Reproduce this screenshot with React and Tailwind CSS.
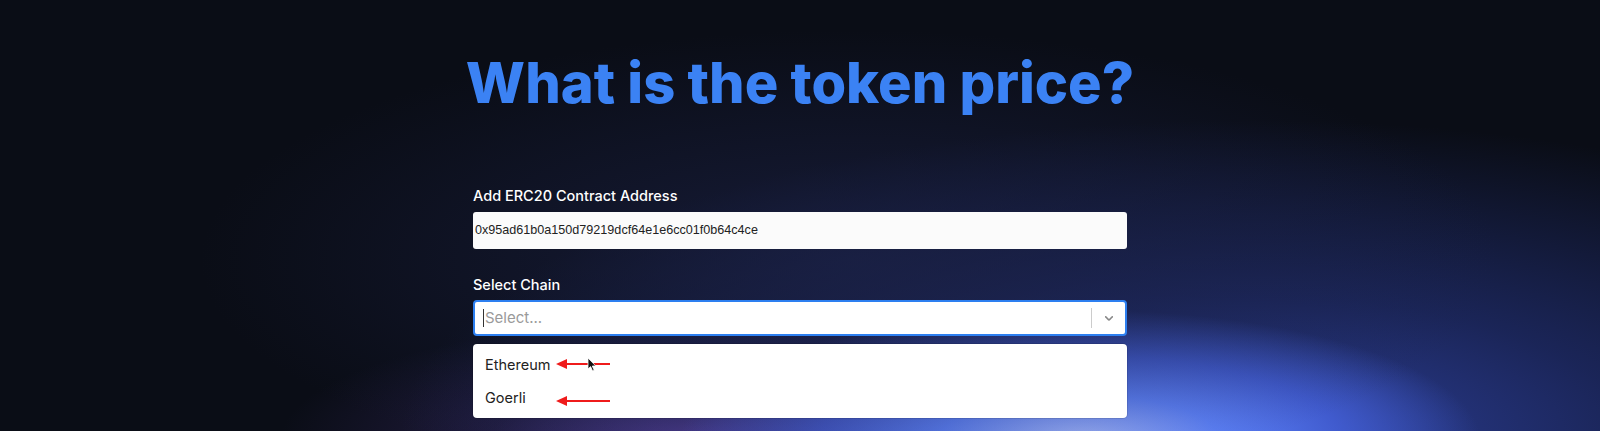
import React from "react";

function Arrow({ className }) {
    return (
        <svg className={className} width="54" height="12" viewBox="0 0 54 12">
            <line x1="8" y1="6" x2="54" y2="6" stroke="#ef1b1b" strokeWidth="2.2" />
            <polygon points="0,6 11,1 11,11" fill="#ef1b1b" />
        </svg>
    );
}

function Cursor({ className }) {
    return (
        <svg className={className} width="10" height="15" viewBox="0 0 10 15">
            <path d="M1 1 L1 12 L3.6 9.6 L5.6 14 L7.2 13.3 L5.3 9 L8.8 9 Z" fill="#111" stroke="#fff" strokeWidth="0.8" />
        </svg>
    );
}

export default function App() {
    return (
        <div className="relative h-[431px] w-full overflow-hidden bg-[#0a0d16] font-['Inter',sans-serif]">
            {/* glow in the background */}
            <div className="absolute inset-0 bg-[radial-gradient(ellipse_850px_320px_at_1250px_440px,rgba(48,68,165,0.95)_0%,rgba(32,45,110,0.75)_45%,transparent_100%)]" />
            <div className="absolute inset-0 bg-[radial-gradient(ellipse_420px_120px_at_700px_440px,rgba(95,70,170,0.75)_0%,rgba(60,45,110,0.4)_50%,transparent_100%)]" />
            <div className="absolute inset-0 bg-[radial-gradient(ellipse_400px_130px_at_1080px_440px,#a2b6fb_0%,#5b7ff5_35%,rgba(72,102,228,0.75)_65%,transparent_100%)]" />
            <div className="absolute inset-0 bg-[radial-gradient(ellipse_650px_230px_at_850px_260px,rgba(28,34,72,0.7)_0%,transparent_100%)]" />

            <div className="relative flex flex-col items-center pt-[55px]">
                <h1 className="text-[56px] font-extrabold leading-none tracking-[0px] text-[#3b82f4]">
                    What is the token price?
                </h1>

                <div className="mt-[76px] w-[654px]">
                    <label className="block text-[14.5px] font-medium leading-[18px] text-white">
                        Add ERC20 Contract Address
                    </label>
                    <div className="mt-[7px] flex h-[37px] items-center rounded-[3px] bg-[#fbfbfb] px-[2px] font-['Liberation_Sans',sans-serif] text-[12.6px] text-[#222]">
                        0x95ad61b0a150d79219dcf64e1e6cc01f0b64c4ce
                    </div>

                    <label className="mt-[27px] block text-[14.5px] font-medium leading-[18px] text-white">
                        Select Chain
                    </label>
                    <div className="relative mt-[6px]">
                        <div className="flex h-[36px] items-center rounded-[4px] border-2 border-[#2d7ff0] bg-white">
                            <div className="flex flex-1 items-center pl-[8px] text-[15px] text-[#9a9a9a]">
                                <span className="mr-[1px] h-[18px] w-px bg-[#333]" />
                                Select...
                            </div>
                            <span className="h-[20px] w-px bg-[#ccc]" />
                            <div className="flex w-[33px] items-center justify-center text-[#888]">
                                <svg width="14" height="14" viewBox="0 0 20 20" fill="currentColor">
                                    <path d="M4.516 7.548c0.436-0.446 1.043-0.481 1.576 0l3.908 3.747 3.908-3.747c0.533-0.481 1.141-0.446 1.574 0 0.436 0.445 0.408 1.197 0 1.615-0.406 0.418-4.695 4.502-4.695 4.502-0.217 0.223-0.502 0.335-0.787 0.335s-0.57-0.112-0.789-0.335c0 0-4.287-4.084-4.695-4.502s-0.436-1.17 0-1.615z" />
                                </svg>
                            </div>
                        </div>

                        <div className="mt-[8px] rounded-[4px] bg-white py-[4px] text-[14.5px] text-[#222] shadow-[0_0_0_1px_rgba(0,0,0,0.1)]">
                            <div className="relative flex h-[33px] items-center px-[12px]">
                                Ethereum
                                <Arrow className="absolute left-[83px] top-[10px]" />
                                <Cursor className="absolute left-[114px] top-[9px]" />
                            </div>
                            <div className="relative flex h-[33px] items-center px-[12px]">
                                Goerli
                                <Arrow className="absolute left-[83px] top-[14px]" />
                            </div>
                        </div>
                    </div>
                </div>
            </div>
        </div>
    );
}
